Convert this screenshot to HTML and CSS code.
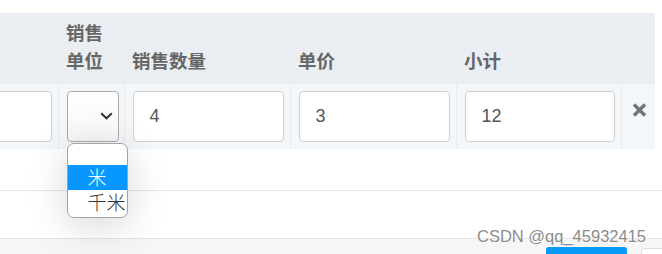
FILE: index.html
```html
<!DOCTYPE html>
<html lang="zh">
<head>
<meta charset="utf-8">
<link rel="stylesheet" href="styles.css">
</head>
<body>
<div class="page">
  <table class="grid">
    <colgroup>
      <col class="c0"><col class="c1"><col class="c2"><col class="c3"><col class="c4"><col class="c5">
    </colgroup>
    <thead>
      <tr>
        <th></th>
        <th>销售<br>单位</th>
        <th>销售数量</th>
        <th>单价</th>
        <th>小计</th>
        <th></th>
      </tr>
    </thead>
    <tbody>
      <tr>
        <td><div class="input"></div></td>
        <td>
          <div class="select-wrap">
            <div class="select">
              <svg class="chev" width="13" height="8" viewBox="0 0 13 8"><path d="M1.2 1.3 L6.5 6.3 L11.8 1.3" fill="none" stroke="#333" stroke-width="2"/></svg>
            </div>
            <ul class="dropdown">
              <li class="opt empty"></li>
              <li class="opt active">米</li>
              <li class="opt">千米</li>
            </ul>
          </div>
        </td>
        <td><div class="input">4</div></td>
        <td><div class="input">3</div></td>
        <td><div class="input">12</div></td>
        <td class="del">
          <svg width="15" height="14" viewBox="0 0 15 14"><path d="M2 1.5 L13 12.5 M13 1.5 L2 12.5" stroke="#737373" stroke-width="3.4" stroke-linecap="butt"/></svg>
        </td>
      </tr>
    </tbody>
  </table>
  <div class="blank"></div>
  <div class="blank2"></div>
  <div class="footer">
    <div class="btn-primary"></div>
    <div class="btn-default"></div>
  </div>
  <div class="watermark">CSDN @qq_45932415</div>
</div>
</body>
</html>
```
FILE: styles.css
```css
html, body {
  margin: 0;
  padding: 0;
  background: #fff;
  overflow: hidden;
}
body {
  font-family: "Liberation Sans", "Noto Sans CJK SC", sans-serif;
  width: 662px;
  height: 254px;
}
.page {
  position: relative;
  height: 254px;
  padding-top: 13px;
  box-sizing: border-box;
  overflow: hidden;
}
.grid {
  border-collapse: collapse;
  table-layout: fixed;
  width: 765px;
  margin-left: -110px;
}
.c0 { width: 168px; }
.c1 { width: 66px; }
.c2 { width: 166px; }
.c3 { width: 166px; }
.c4 { width: 165px; }
.c5 { width: 34px; }
.grid th {
  background: #eaeef2;
  height: 71px;
  box-sizing: border-box;
  vertical-align: bottom;
  text-align: left;
  padding: 0 8px 10px 8px;
  font-family: "Noto Sans CJK SC", sans-serif;
  font-weight: 700;
  font-size: 18.5px;
  line-height: 28px;
  color: #666;
  white-space: nowrap;
}
.grid td {
  background: #f4f7fa;
  padding: 7px 6px 7px 8px;
  border-left: 1px solid #e7ebef;
  vertical-align: top;
}
.grid td:first-child { border-left: none; }
.input {
  height: 51px;
  box-sizing: border-box;
  border: 1px solid #cfcfcf;
  border-radius: 4px;
  background: #fff;
  padding-left: 16px;
  font-size: 18px;
  line-height: 49px;
  color: #555;
}
.select-wrap {
  position: relative;
  width: 52px;
}
.select {
  height: 51px;
  box-sizing: border-box;
  border: 1px solid #a9a9a9;
  border-radius: 4px;
  background: linear-gradient(#fff, #f7f7f7);
  position: relative;
}
.chev {
  position: absolute;
  left: 32px;
  top: 20px;
}
.dropdown {
  position: absolute;
  left: 0;
  top: 52px;
  width: 61px;
  margin: 0;
  padding: 0;
  list-style: none;
  background: #fff;
  border: 1px solid #a3a3a3;
  border-radius: 7px;
  box-sizing: border-box;
  overflow: hidden;
  z-index: 5;
  box-shadow: 0 8px 40px rgba(0,0,0,0.16);
  padding-bottom: 3px;
}
.opt {
  height: 24px;
  line-height: 24px;
  padding-left: 20px;
  font-family: "Noto Sans CJK SC", sans-serif;
  font-size: 19px;
  font-weight: 300;
  color: #333;
  white-space: nowrap;
}
.opt.empty { height: 21px; }
.opt.active {
  background: #0797ff;
  color: #fff;
  height: 25px;
}
.del {
  padding: 19px 0 0 10px !important;
}
.blank {
  height: 41px;
  border-bottom: 1px solid #e3e3e3;
}
.blank2 {
  height: 47px;
  border-bottom: 1px solid #e6e6e6;
}
.footer {
  background: #f6f6f6;
  height: 20px;
  display: flex;
  gap: 14px;
  padding: 8px 0 0 546px;
}
.btn-primary {
  flex: 0 0 81px;
  height: 20px;
  background: #0a9bf7;
  border-radius: 3px 3px 0 0;
}
.btn-default {
  flex: 0 0 40px;
  height: 20px;
  margin-top: 1px;
  background: #fff;
  border: 1px solid #dcdcdc;
  border-radius: 3px 3px 0 0;
}
.watermark {
  position: absolute;
  left: 477px;
  top: 225px;
  font-family: "Liberation Sans", sans-serif;
  font-size: 16.5px;
  line-height: 22px;
  color: #8c8c8c;
  text-shadow: 0 0 2px #fff, 0 0 2px #fff;
  white-space: nowrap;
  z-index: 6;
}
```
